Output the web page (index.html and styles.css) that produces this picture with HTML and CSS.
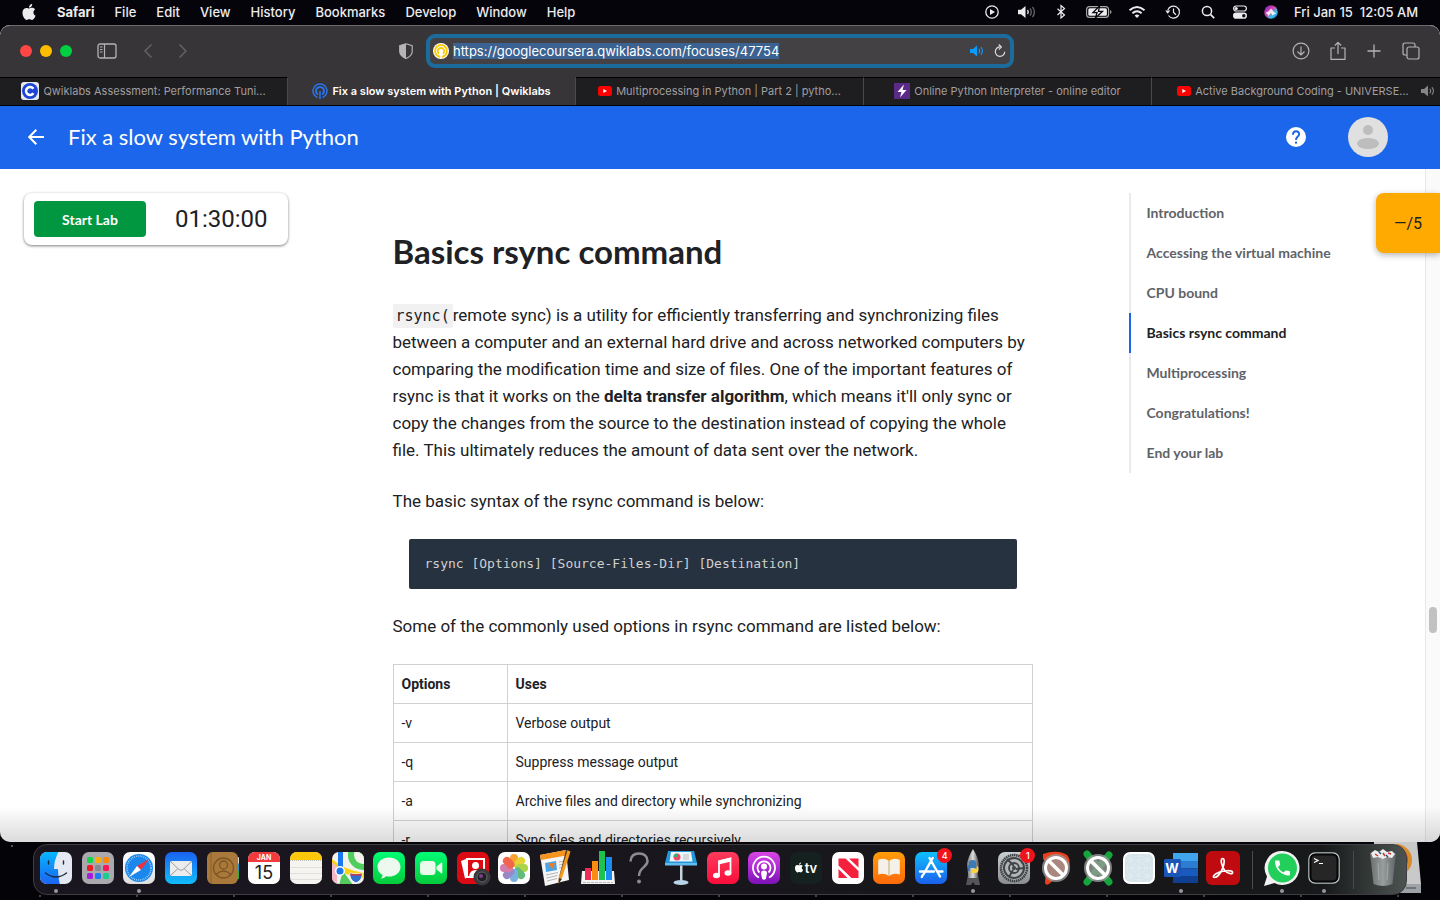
FILE: index.html
```html
<!DOCTYPE html>
<html lang="en">
<head>
<meta charset="utf-8">
<meta name="viewport" content="width=device-width, initial-scale=1">
<title>Fix a slow system with Python | Qwiklabs</title>
<link rel="stylesheet" href="styles.css">
</head>
<body>

<!-- shared shapes -->
<svg class="defs" width="0" height="0" aria-hidden="true">
  <defs>
    <symbol id="apple" viewBox="0 0 24 24">
      <path fill="currentColor" d="M12.152 6.896c-.948 0-2.415-1.078-3.96-1.04-2.04.027-3.91 1.183-4.961 3.014-2.117 3.675-.546 9.103 1.519 12.09 1.013 1.454 2.208 3.09 3.792 3.039 1.52-.065 2.09-.987 3.935-.987 1.831 0 2.35.987 3.96.948 1.637-.026 2.676-1.48 3.676-2.948 1.156-1.688 1.636-3.325 1.662-3.415-.039-.013-3.182-1.221-3.22-4.857-.026-3.04 2.48-4.494 2.597-4.559-1.429-2.09-3.623-2.324-4.39-2.376-2-.156-3.675 1.09-4.61 1.09zM15.53 3.83c.843-1.012 1.4-2.427 1.245-3.83-1.207.052-2.662.805-3.532 1.818-.78.896-1.454 2.338-1.273 3.714 1.338.104 2.715-.688 3.559-1.701"/>
    </symbol>
    <symbol id="youtube" viewBox="0 0 14 12">
      <rect y="1" width="14" height="10" rx="2.5" fill="#f00"/>
      <path d="M5.3 3.9v4.2L9 6z" fill="#fff"/>
    </symbol>
    <symbol id="speaker" viewBox="0 0 14 12">
      <path d="M0 4h3l4-3.4v10.800L3 8H0z" fill="currentColor"/>
      <path d="M9 4q1.400 2 0 4M11.200 2.600q2.500 3.400 0 6.800" fill="none" stroke="currentColor" stroke-width="1.100" stroke-linecap="round"/>
    </symbol>
    <symbol id="blocked" viewBox="0 0 34 34">
      <circle cx="17" cy="17" r="14" fill="#999" opacity=".8"/>
      <circle cx="17" cy="17" r="10.500" fill="none" stroke="#fff" stroke-width="3"/>
      <path d="M9.500 9.500l15 15" stroke="#fff" stroke-width="3.500"/>
    </symbol>
    <linearGradient id="gBlue" x2="0" y2="1"><stop stop-color="#1a62f0"/><stop offset="1" stop-color="#12bdfb"/></linearGradient>
    <linearGradient id="gStore" x2="0" y2="1"><stop stop-color="#0fc0fc"/><stop offset="1" stop-color="#1b60ee"/></linearGradient>
    <linearGradient id="gFinder" x2="0" y2="1"><stop stop-color="#06b8ff"/><stop offset="1" stop-color="#1c62f2"/></linearGradient>
    <linearGradient id="gGreen" x2="0" y2="1"><stop stop-color="#02fb76"/><stop offset="1" stop-color="#05cb3b"/></linearGradient>
    <linearGradient id="gGrey" x2="0" y2="1"><stop stop-color="#c9cfd2"/><stop offset="1" stop-color="#8a8d90"/></linearGradient>
    <linearGradient id="gPod" x2="0" y2="1"><stop stop-color="#d945e8"/><stop offset="1" stop-color="#7d12b8"/></linearGradient>
    <linearGradient id="gMusic" x2="0" y2="1"><stop stop-color="#fb3b5d"/><stop offset="1" stop-color="#fb0d3a"/></linearGradient>
    <linearGradient id="gBook" x2="0" y2="1"><stop stop-color="#ff9d0a"/><stop offset="1" stop-color="#ff6a0a"/></linearGradient>
    <linearGradient id="gPaper" x2="0" y2="1"><stop stop-color="#fff"/><stop offset="1" stop-color="#dedede"/></linearGradient>
    <linearGradient id="gRocket"><stop stop-color="#777"/><stop offset=".5" stop-color="#ddd"/><stop offset="1" stop-color="#444"/></linearGradient>
    <linearGradient id="gBin"><stop stop-color="#74787a"/><stop offset=".5" stop-color="#a9adae"/><stop offset="1" stop-color="#62676a"/></linearGradient>
    <linearGradient id="gSiri" x2="1" y2="1"><stop stop-color="#4a2bd8"/><stop offset=".4" stop-color="#e23aa5"/><stop offset=".7" stop-color="#36c5e8"/><stop offset="1" stop-color="#2358d8"/></linearGradient>
    <clipPath id="tile"><rect x="1" y="1" width="32" height="32" rx="7"/></clipPath>
  </defs>
</svg>

<header class="menubar">
  <nav class="menus">
    <svg class="apple" width="16" height="16"><use href="#apple"/></svg>
    <a class="app-name" href="#">Safari</a>
    <a href="#">File</a>
    <a href="#">Edit</a>
    <a href="#">View</a>
    <a href="#">History</a>
    <a href="#">Bookmarks</a>
    <a href="#">Develop</a>
    <a href="#">Window</a>
    <a href="#">Help</a>
  </nav>
  <div class="status">
    <svg width="16" height="16" viewBox="0 0 16 16"><circle cx="8" cy="8" r="6.200" fill="none" stroke="currentColor" stroke-width="1.300"/><path d="M6 5v6l5-3z" fill="currentColor"/></svg>
    <svg width="20" height="16" viewBox="0 0 20 16"><path d="M2 5.700h3L9.500 2v12L5 10.300H2z" fill="currentColor"/><path d="M11.500 6q1.500 2 0 4" fill="none" stroke="currentColor" stroke-width="1.300"/><path d="M14 4.300q2.600 3.700 0 7.400M16.500 2.800q3.800 5.200 0 10.400" fill="none" stroke="#66666a" stroke-width="1.300"/></svg>
    <svg width="18" height="16" viewBox="0 0 18 16"><path d="M5.500 4.800l7 6.200L9 14V1.500l3.500 3L5.500 11" fill="none" stroke="currentColor" stroke-width="1.200"/></svg>
    <svg width="26" height="16" viewBox="0 0 26 16"><rect x=".6" y="2.600" width="22" height="10.800" rx="3" fill="none" stroke="#aaa" stroke-width="1.100"/><rect x="2.300" y="4.300" width="18.600" height="7.400" rx="1.500" fill="currentColor"/><path d="M24.200 6v4q1.300-.6 1.300-2t-1.300-2z" fill="#aaa"/><path d="M13.500 2L7 8.600h4L9.500 14 16.500 7.300h-4z" fill="currentColor" stroke="#05050c" stroke-width="1.300"/></svg>
    <svg width="18" height="16" viewBox="0 0 18 16"><g fill="none" stroke="currentColor" stroke-width="2"><path d="M1.500 6.300q7.500-6.600 15 0M4.400 9.300q4.600-4 9.200 0"/></g><path d="M6.600 11.600q2.400-2 4.800 0L9 14z" fill="currentColor"/></svg>
    <svg width="22" height="16" viewBox="0 0 22 16"><path d="M5.800 6A6 6 0 1 1 6.500 11.500" fill="none" stroke="currentColor" stroke-width="1.200"/><path d="M3.300 6.500h5l-2.600 3.200z" fill="currentColor"/><path d="M11.500 4.500V8.500l2.500 2.300" fill="none" stroke="currentColor" stroke-width="1.200"/></svg>
    <svg width="16" height="16" viewBox="0 0 16 16"><circle cx="7" cy="7" r="4.600" fill="none" stroke="currentColor" stroke-width="1.500"/><path d="M10.400 10.400l3.800 3.800" stroke="currentColor" stroke-width="1.700"/></svg>
    <svg width="16" height="16" viewBox="0 0 16 16"><rect x="1.600" y="2" width="12.800" height="5" rx="2.500" fill="none" stroke="currentColor" stroke-width="1.200"/><circle cx="4.200" cy="4.500" r="1.600" fill="currentColor"/><rect x="1" y="8.600" width="14" height="6.200" rx="3.100" fill="currentColor"/><circle cx="11.800" cy="11.700" r="1.700" fill="#111"/></svg>
    <svg width="14" height="16" viewBox="0 0 14 16"><circle cx="7" cy="8" r="6.800" fill="url(#gSiri)"/><path d="M1.500 9Q5 8 7 4.500 9.500 8 12.500 10q-3-.5-4 1.500L7 9l-2.500 3q-.5-2-3-3z" fill="#fff" opacity=".85"/></svg>
    <time class="clock">Fri Jan 15&nbsp; 12:05 AM</time>
  </div>
</header>

<section class="window">
  <div class="toolbar">
    <div class="toolbar-left">
      <div class="lights">
        <button class="light close" aria-label="Close"></button>
        <button class="light minimize" aria-label="Minimize"></button>
        <button class="light zoom" aria-label="Zoom"></button>
      </div>
      <button class="tool" aria-label="Sidebar"><svg width="20" height="16" viewBox="0 0 20 16"><rect x="1" y="1" width="18" height="14" rx="2" fill="none" stroke="currentColor" stroke-width="1.300"/><path d="M7.500 1v14M3 4h2.500M3 6.500h2.500M3 9h2.500" stroke="currentColor" stroke-width="1.200"/></svg></button>
      <div class="history">
        <button class="tool dim" aria-label="Back"><svg width="10" height="16" viewBox="0 0 10 16"><path d="M8.500 1.500L2 8l6.500 6.500" fill="none" stroke="currentColor" stroke-width="1.500"/></svg></button>
        <button class="tool dim" aria-label="Forward"><svg width="10" height="16" viewBox="0 0 10 16"><path d="M1.500 1.500L8 8l-6.500 6.500" fill="none" stroke="currentColor" stroke-width="1.500"/></svg></button>
      </div>
      <button class="tool shield" aria-label="Privacy report"><svg width="14" height="16" viewBox="0 0 14 16"><path d="M7 .8l6.200 2v6Q13 13 7 15.500 1 13 .8 8.800v-6z" fill="none" stroke="currentColor" stroke-width="1.200"/><path d="M7 .5L.5 2.500v6.300Q.8 13.200 7 16z" fill="currentColor"/></svg></button>
    </div>
    <div class="address">
      <svg width="16" height="16" viewBox="0 0 16 16"><circle cx="8" cy="8" r="8" fill="#fff"/><circle cx="8" cy="8" r="5.900" fill="none" stroke="#fbcb0a" stroke-width="2"/><path d="M6 10.700A3.200 3.200 0 1 1 10 10.700" fill="none" stroke="#fbcb0a" stroke-width="1.800"/><path d="M8 8v7" stroke="#fff" stroke-width="1.600"/></svg>
      <input class="url" type="text" aria-label="Address" value="https://googlecoursera.qwiklabs.com/focuses/47754">
      <button class="tool sound" aria-label="Mute tab"><svg width="14" height="12"><use href="#speaker"/></svg></button>
      <button class="tool" aria-label="Reload"><svg width="12" height="14" viewBox="0 0 12 14"><path d="M6.500 3A4.700 4.700 0 1 0 10.700 7.700" fill="none" stroke="#ddd" stroke-width="1.200"/><path d="M4.800 .5L7.400 3.100 4.800 5.700" fill="none" stroke="#ddd" stroke-width="1.200"/></svg></button>
    </div>
    <div class="toolbar-right">
      <button class="tool" aria-label="Downloads"><svg width="18" height="18" viewBox="0 0 18 18"><circle cx="9" cy="9" r="7.900" fill="none" stroke="currentColor" stroke-width="1.200"/><path d="M9 4.500v8.500M5.500 9.500L9 13l3.500-3.500" fill="none" stroke="currentColor" stroke-width="1.200"/></svg></button>
      <button class="tool" aria-label="Share"><svg width="16" height="20" viewBox="0 0 16 20"><path d="M5 7H1v11.400h14V7h-4M8 13V1.500M4.800 4.500L8 1.300l3.200 3.200" fill="none" stroke="currentColor" stroke-width="1.200" stroke-linejoin="round"/></svg></button>
      <button class="tool" aria-label="New tab"><svg width="16" height="16" viewBox="0 0 16 16"><path d="M8 1.500v13M1.500 8h13" stroke="currentColor" stroke-width="1.300"/></svg></button>
      <button class="tool" aria-label="Show tabs"><svg width="18" height="18" viewBox="0 0 18 18"><rect x="5" y="5" width="12" height="12" rx="2" fill="none" stroke="currentColor" stroke-width="1.200"/><path d="M5 13H3q-2 0-2-2V3q0-2 2-2h8q2 0 2 2v2" fill="none" stroke="currentColor" stroke-width="1.200"/></svg></button>
    </div>
  </div>

  <nav class="tabs">
    <a class="tab" href="#">
      <svg width="18" height="18" viewBox="0 0 18 18"><rect width="18" height="18" rx="3" fill="#e8e8f0"/><circle cx="9" cy="9" r="8" fill="#1b45d2"/><path d="M12.400 6.800A4 4 0 1 0 12.400 11.200" fill="none" stroke="#fff" stroke-width="2.500"/></svg>
      <span>Qwiklabs Assessment: Performance Tuni...</span>
    </a>
    <a class="tab active" href="#">
      <svg width="16" height="16" viewBox="0 0 16 16"><path d="M5.500 14.600A7 7 0 1 1 10.500 14.600" fill="none" stroke="#2a72ea" stroke-width="1.500"/><path d="M6 11.500A4 4 0 1 1 10 11.500" fill="none" stroke="#2a72ea" stroke-width="2"/><path d="M8 8v8" stroke="#2a72ea" stroke-width="1.600"/></svg>
      <span>Fix a slow system with Python | Qwiklabs</span>
    </a>
    <a class="tab" href="#">
      <svg width="14" height="12"><use href="#youtube"/></svg>
      <span>Multiprocessing in Python | Part 2 | pytho...</span>
    </a>
    <a class="tab" href="#">
      <svg width="16" height="16" viewBox="0 0 16 16"><rect width="16" height="16" fill="#5b2a86"/><path d="M10 1.500L3.500 9H7.500L6 14.500 12.500 7H8.500z" fill="#fff"/></svg>
      <span>Online Python Interpreter - online editor</span>
    </a>
    <a class="tab playing" href="#">
      <svg width="14" height="12"><use href="#youtube"/></svg>
      <span>Active Background Coding - UNIVERSE...</span>
      <svg class="tab-sound" width="14" height="12"><use href="#speaker"/></svg>
    </a>
  </nav>

  <header class="lab-header">
    <a class="back" href="#" aria-label="Back"><svg width="16" height="16" viewBox="0 0 16 16"><path d="M16 8H1.500M8.300 .8L1.200 8l7.100 7.200" fill="none" stroke="#fff" stroke-width="2"/></svg></a>
    <h1>Fix a slow system with Python</h1>
    <button class="help" aria-label="Help"><svg width="20" height="20" viewBox="0 0 20 20"><circle cx="10" cy="10" r="10" fill="#fff"/><path d="M6.900 7.800Q6.900 4.300 10 4.300T13.100 7.200C13.100 9.500 10 9.700 10 13" fill="none" stroke="#1b66ea" stroke-width="1.900"/><rect x="9" y="14.600" width="2" height="2" fill="#1b66ea"/></svg></button>
    <button class="avatar" aria-label="Account"><svg width="40" height="40" viewBox="0 0 40 40"><circle cx="20" cy="20" r="20" fill="#e0e0e0"/><circle cx="20" cy="13" r="5" fill="#bdbdbd"/><ellipse cx="20" cy="26.500" rx="11" ry="5.500" fill="#bdbdbd"/></svg></button>
  </header>

  <div class="page">
    <div class="lab">
      <aside class="lab-side">
        <div class="lab-control">
          <button class="start">Start Lab</button>
          <span class="timer">01:30:00</span>
        </div>
      </aside>

      <main class="lab-content">
        <h2>Basics rsync command</h2>
        <p><code>rsync(</code>remote sync) is a utility for efficiently transferring and synchronizing files between a computer and an external hard drive and across networked computers by comparing the modification time and size of files. One of the important features of rsync is that it works on the <strong>delta transfer algorithm</strong>, which means it'll only sync or copy the changes from the source to the destination instead of copying the whole file. This ultimately reduces the amount of data sent over the network.</p>
        <p>The basic syntax of the rsync command is below:</p>
        <pre>rsync [Options] [Source-Files-Dir] [Destination]</pre>
        <p>Some of the commonly used options in rsync command are listed below:</p>
        <table>
          <thead>
            <tr><th>Options</th><th>Uses</th></tr>
          </thead>
          <tbody>
            <tr><td>-v</td><td>Verbose output</td></tr>
            <tr><td>-q</td><td>Suppress message output</td></tr>
            <tr><td>-a</td><td>Archive files and directory while synchronizing</td></tr>
            <tr><td>-r</td><td>Sync files and directories recursively</td></tr>
          </tbody>
        </table>
      </main>

      <nav class="outline">
        <a href="#">Introduction</a>
        <a href="#">Accessing the virtual machine</a>
        <a href="#">CPU bound</a>
        <a class="current" href="#">Basics rsync command</a>
        <a href="#">Multiprocessing</a>
        <a href="#">Congratulations!</a>
        <a href="#">End your lab</a>
      </nav>
    </div>
    <div class="scrollbar"><div class="thumb"></div></div>
    <button class="score">—/5</button>
  </div>
</section>

<footer class="desktop">
  <!-- disk on the desktop, partly behind the dock -->
  <svg class="disk" width="50" height="54" viewBox="0 0 50 54"><path d="M2 0h43l4 42H0z" fill="#c9c9c9"/><circle cx="24" cy="18" r="16" fill="#d98a2b"/><circle cx="24" cy="18" r="12" fill="#c43"/><path d="M0 42h49v9H0z" fill="#9da3a8"/><path d="M34 46h10" stroke="#444"/></svg>
  <div class="dock">
    <div class="apps">
      <button class="item running" aria-label="Finder"><svg width="34" height="34" viewBox="0 0 34 34"><g clip-path="url(#tile)"><path d="M0 0h34v34H0z" fill="#e3e8f2"/><path d="M0 0h20q-5 9-5 18h4q0 8 2 16H0z" fill="url(#gFinder)"/></g><path d="M9.500 10v3M24.500 10v3M6.500 22q10.500 8 21 0" fill="none" stroke="#1d2a3c" stroke-width="1.400" stroke-linecap="round"/></svg></button>
      <button class="item" aria-label="Launchpad"><svg width="34" height="34" viewBox="0 0 34 34"><rect x="1" y="1" width="32" height="32" rx="7" fill="#a9a9ae"/><rect x="6" y="6" width="6" height="6" rx="1.500" fill="#12d64a"/><rect x="14" y="6" width="6" height="6" rx="1.500" fill="#f9ad0b"/><rect x="22" y="6" width="6" height="6" rx="1.500" fill="#fb8a0c"/><rect x="6" y="14" width="6" height="6" rx="1.500" fill="#ee1c25"/><rect x="14" y="14" width="6" height="6" rx="1.500" fill="#858b90"/><rect x="22" y="14" width="6" height="6" rx="1.500" fill="#f7185c"/><rect x="6" y="22" width="6" height="6" rx="1.500" fill="#a81be0"/><rect x="14" y="22" width="6" height="6" rx="1.500" fill="#1c7df5"/><rect x="22" y="22" width="6" height="6" rx="1.500" fill="#16cf8e"/></svg></button>
      <button class="item running" aria-label="Safari"><svg width="34" height="34" viewBox="0 0 34 34"><rect x="1" y="1" width="32" height="32" rx="7" fill="url(#gPaper)"/><circle cx="17" cy="17" r="14" fill="#1b87ec"/><circle cx="17" cy="17" r="12" fill="none" stroke="#bfe3ff" stroke-width="1.500" stroke-dasharray=".7 1.200"/><path d="M27 8L15 15l4 4z" fill="#f2303a"/><path d="M7 26l8-11 4 4z" fill="#fff"/></svg></button>
      <button class="item" aria-label="Mail"><svg width="34" height="34" viewBox="0 0 34 34"><rect x="1" y="1" width="32" height="32" rx="7" fill="url(#gBlue)"/><rect x="6" y="10" width="22" height="15" rx="2" fill="#ececec"/><path d="M6.500 10.500L15 18.500q2 1.700 4 0l8.500-8M6.500 24.500l7.500-7M27.500 24.500l-7.500-7" fill="none" stroke="#9a9fa6" stroke-width="1"/></svg></button>
      <button class="item" aria-label="Contacts"><svg width="34" height="34" viewBox="0 0 34 34"><rect x="28" y="6" width="5" height="7" rx="1" fill="#d9d9d9"/><rect x="28" y="13" width="5" height="7" fill="#1f93c4"/><rect x="28" y="20" width="5" height="8" fill="#38a838"/><rect x="1" y="1" width="31" height="32" rx="6" fill="#a9793c"/><path d="M5 1v32" stroke="#8d622d"/><g fill="none" stroke="#7d5525" stroke-width="1.300"><circle cx="17.500" cy="17" r="10"/><circle cx="17.500" cy="14" r="4"/><path d="M10 23.500q7.500-7 15 0"/></g></svg></button>
      <button class="item" aria-label="Calendar"><svg width="34" height="34" viewBox="0 0 34 34"><g clip-path="url(#tile)"><path d="M0 0h34v34H0z" fill="#fff"/><path d="M0 0h34v11H0z" fill="#f33b3b"/></g><text x="17" y="9" class="cal-month">JAN</text><text x="17" y="28" class="cal-day">15</text></svg></button>
      <button class="item" aria-label="Notes"><svg width="34" height="34" viewBox="0 0 34 34"><g clip-path="url(#tile)"><path d="M0 0h34v34H0z" fill="#f5f4f0"/><path d="M0 0h34v9H0z" fill="#fdc80c"/><path d="M1 16.500h32M1 22.500h32M1 28.500h32" stroke="#e0e0dc"/><path d="M1 9.500h32" stroke="#bbb" stroke-dasharray="1 1"/></g></svg></button>
      <button class="item" aria-label="Maps"><svg width="34" height="34" viewBox="0 0 34 34"><g clip-path="url(#tile)"><path d="M0 0h34v34H0z" fill="#f3f2ea"/><circle cx="32" cy="4" r="15" fill="#4fce5d"/><circle cx="32" cy="4" r="9" fill="#f3f2ea"/><path d="M1 8q10 10 32 14v5Q10 24 1 14z" fill="#fbd20d"/><path d="M0 10l6 6v18H0z" fill="#f5b8c6"/><path d="M12 20l10 14H8z" fill="#55c95d"/><path d="M7 0h5v20H7z" fill="#1b78f0"/></g><circle cx="9" cy="20" r="5" fill="#fff"/><circle cx="9" cy="20" r="3.500" fill="#1b78f0"/><path d="M19 22q6 2 12 0 1 7-6 10-7-3-6-10z" fill="#2f6fd0" stroke="#fff" stroke-width=".8"/><path d="M19.500 22.500q5.500 1.500 11 0v2h-11z" fill="#d8323a"/></svg></button>
      <button class="item" aria-label="Messages"><svg width="34" height="34" viewBox="0 0 34 34"><rect x="1" y="1" width="32" height="32" rx="7" fill="url(#gGreen)"/><path d="M17 6.500c-7 0-11.500 4.300-11.500 9.500 0 3.500 2 6.300 5 8 .2 1.500-.7 2.700-2 3.500 2.500 0 4.300-.7 5.500-2.200 8 1.500 14.500-3 14.500-9.300 0-5.200-4.500-9.500-11.500-9.500z" fill="#edf9ee"/></svg></button>
      <button class="item" aria-label="FaceTime"><svg width="34" height="34" viewBox="0 0 34 34"><rect x="1" y="1" width="32" height="32" rx="7" fill="url(#gGreen)"/><rect x="6" y="10" width="15.500" height="14" rx="3.500" fill="#eafaeb"/><path d="M22.500 15.500l5-4q.8 0 .8 1v9q0 1-.8 1l-5-4z" fill="#eafaeb"/></svg></button>
      <button class="item" aria-label="Photo Booth"><svg width="34" height="34" viewBox="0 0 34 34"><rect x="1" y="1" width="32" height="32" rx="7" fill="#dc0a12"/><path d="M5 10l5-2 5 18-6 1.500z" fill="#fff"/><path d="M10 7h19v20H10z" fill="#fff"/><path d="M12 9h15v16H12z" fill="#dc0a12"/><circle cx="19.500" cy="14.500" r="3.500" fill="#fff"/><path d="M13 25q1-6 6.500-6t6.500 6z" fill="#fff"/><circle cx="26" cy="26" r="8.500" fill="#3a3a3c"/><circle cx="26" cy="26" r="5" fill="#202024" stroke="#66666a"/><circle cx="25" cy="25" r="2" fill="#7a3f8c"/></svg></button>
      <button class="item" aria-label="Photos"><svg width="34" height="34" viewBox="0 0 34 34"><rect x="1" y="1" width="32" height="32" rx="7" fill="#fff"/><g opacity=".9"><rect x="13" y="3" width="8" height="13" rx="4" fill="#fb9a1c"/><rect x="13" y="3" width="8" height="13" rx="4" fill="#e0cf1f" transform="rotate(45 17 17)"/><rect x="13" y="3" width="8" height="13" rx="4" fill="#a5cf35" transform="rotate(90 17 17)"/><rect x="13" y="3" width="8" height="13" rx="4" fill="#4fb56c" transform="rotate(135 17 17)"/><rect x="13" y="3" width="8" height="13" rx="4" fill="#6aa8dc" transform="rotate(180 17 17)"/><rect x="13" y="3" width="8" height="13" rx="4" fill="#8e7cc3" transform="rotate(225 17 17)"/><rect x="13" y="3" width="8" height="13" rx="4" fill="#d070a5" transform="rotate(270 17 17)"/><rect x="13" y="3" width="8" height="13" rx="4" fill="#f0553c" transform="rotate(315 17 17)"/></g></svg></button>
      <button class="item" aria-label="Pages"><svg width="34" height="34" viewBox="0 0 34 34"><path d="M1 4l26-5 3 30-24 6z" fill="#f5f5f5"/><path d="M1 4l26-5 .6 5.500L1.800 9z" fill="#f7941e"/><path d="M6 12l11-2 1 9-11 2z" fill="#4aa5e8"/><path d="M9 12.500l7-.5-2.500 6z" fill="#f47b20"/><path d="M20 11l6-1M20 14l5-.8M20 17l5-.8M7 24l12-2.500M7.500 27l11-2.500M8 30l10-2.500" stroke="#b5b5b5"/><path d="M28-1l3.500 1.500L23 27l-3.500 6 .3-7z" fill="#f39a1f"/><path d="M27-1l1.500.4-8.500 27z" fill="#5a3a1a"/><path d="M19.800 27l3 1-3.300 5z" fill="#333"/></svg></button>
      <button class="item" aria-label="Numbers"><svg width="34" height="34" viewBox="0 0 34 34"><path d="M1 20h32l1 13H0z" fill="#f4f4f4"/><rect x="4" y="17" width="6" height="12" fill="#ef2b55"/><rect x="11" y="10" width="6" height="19" fill="#fb8c12"/><rect x="18" y="0" width="6" height="29" fill="#1fc24c"/><rect x="25" y="6" width="6" height="23" fill="#1c8df0"/><path d="M2 31.500h30" stroke="#bbb" stroke-dasharray="3 1"/></svg></button>
      <button class="item" aria-label="Missing application"><svg width="34" height="34" viewBox="0 0 34 34"><path d="M8.500 10.500Q9 2.500 17 2.500t8.500 7.500c0 6.500-8.500 6-8.500 15" fill="none" stroke="#8d8b91" stroke-width="2.500"/><circle cx="17" cy="30.500" r="2" fill="#8d8b91"/></svg></button>
      <button class="item" aria-label="Keynote"><svg width="34" height="34" viewBox="0 0 34 34"><path d="M4 0h26l3 12H1z" fill="#2196d8"/><path d="M1 12h32v2.500H1z" fill="#64bdf0"/><path d="M7 1h20l1.500 9.500h-23z" fill="#eef5fa"/><circle cx="13" cy="6" r="3.500" fill="#ef4a6a"/><path d="M13 6V2.500a3.500 3.500 0 0 0-3.500 3.500z" fill="#2bb673"/><path d="M19 4h6M19 6h6M19 8h6" stroke="#bbb"/><path d="M16 14.500h2.500V31H16z" fill="#c7d3dd"/><ellipse cx="17" cy="31.500" rx="7.500" ry="2.500" fill="#b9d4e8"/></svg></button>
      <button class="item" aria-label="Music"><svg width="34" height="34" viewBox="0 0 34 34"><rect x="1" y="1" width="32" height="32" rx="7" fill="url(#gMusic)"/><path d="M13 24V10.500l11.500-3V21.500" fill="none" stroke="#fff" stroke-width="1.800"/><path d="M12.500 9.500l12.500-3v4l-12.500 3z" fill="#fff"/><ellipse cx="10.500" cy="24.500" rx="3.500" ry="2.800" fill="#fff"/><ellipse cx="22" cy="22" rx="3.500" ry="2.800" fill="#fff"/></svg></button>
      <button class="item" aria-label="Podcasts"><svg width="34" height="34" viewBox="0 0 34 34"><rect x="1" y="1" width="32" height="32" rx="7" fill="url(#gPod)"/><g fill="none" stroke="#fff" stroke-width="1.800"><path d="M12 26.500A11 11 0 1 1 22 26.500M12.500 21.500A6.500 6.500 0 1 1 21.500 21.500"/></g><circle cx="17" cy="15.500" r="3" fill="#fff"/><path d="M14 22q0-2.500 3-2.500t3 2.500l-1 5.500q-2 2.500-4 0z" fill="#fff"/></svg></button>
      <button class="item" aria-label="TV"><svg width="34" height="34" viewBox="0 0 34 34"><rect x="1" y="1" width="32" height="32" rx="7" fill="#15211f"/><svg x="5" y="10.500" width="10" height="12" color="#fff"><use href="#apple"/></svg><text x="22" y="22" class="tv-word">tv</text></svg></button>
      <button class="item" aria-label="News"><svg width="34" height="34" viewBox="0 0 34 34"><rect x="1" y="1" width="32" height="32" rx="7" fill="#fff"/><path d="M7.500 7.500h7l13 12.500v7h-7l-13-12.500z" fill="#f5203e"/><path d="M18 7.500h9.500v9zM7.500 18l9 9h-9z" fill="#f5203e"/></svg></button>
      <button class="item" aria-label="Books"><svg width="34" height="34" viewBox="0 0 34 34"><rect x="1" y="1" width="32" height="32" rx="7" fill="url(#gBook)"/><path d="M17 10q-4.500-3.500-10-1.500-.8.300-.8 1v14q5.800-2.300 10.800 1.500 5-3.800 10.800-1.500v-14q0-.7-.8-1Q21.500 6.500 17 10z" fill="#f4f1ea"/><path d="M17 10v15" stroke="#cfa66f"/></svg></button>
      <button class="item" aria-label="App Store"><svg width="34" height="34" viewBox="0 0 34 34"><rect x="1" y="1" width="32" height="32" rx="7" fill="url(#gStore)"/><path d="M18.700 7l-9 16M15.500 7l10.500 18.500M6 20.500h14M24 20.500h4.500M8.500 24.500l-.7 1.500" stroke="#fff" stroke-width="2.400" stroke-linecap="round"/></svg><span class="badge">4</span></button>
      <button class="item running" aria-label="Python launcher"><svg width="34" height="34" viewBox="0 0 34 34"><path d="M12 24l-2 10h5l2-3 2 3h5l-2-10z" fill="#555"/><path d="M17-2q-5 8-6 15l1.500 14h9L23 13Q22 6 17-2z" fill="url(#gRocket)"/><path d="M13 12q0-3 3.500-3T20 12v5h-6v3h-2v-5q0-1 1-1z" fill="#3b7ab5"/><path d="M21 15q1.500 0 1.500 3 0 4-3 4h-4v-2q0-2 2-2h3z" fill="#fbd43b"/></svg></button>
      <button class="item" aria-label="System Preferences"><svg width="34" height="34" viewBox="0 0 34 34"><rect x="1" y="1" width="32" height="32" rx="7" fill="url(#gGrey)"/><circle cx="17" cy="17" r="13" fill="#b3b6b8" stroke="#3e4144" stroke-width="2.500" stroke-dasharray="1.500 .6"/><circle cx="17" cy="17" r="10" fill="none" stroke="#414447" stroke-width="2"/><circle cx="17" cy="17" r="5" fill="none" stroke="#414447" stroke-width="1.800"/><circle cx="17" cy="17" r="2" fill="#414447"/><path d="M17 15L10 8M19 18l8-1M16 19l-4 7" stroke="#414447" stroke-width="1.800"/></svg><span class="badge">1</span></button>
      <button class="item" aria-label="Unsupported application"><svg width="34" height="34" viewBox="0 0 34 34"><path d="M4 3q14-5 24 1 4 4 2 12L10 33q-4 2-4-2L8 12 4 8z" fill="#e8401c"/><use href="#blocked" width="34" height="34"/></svg></button>
      <button class="item" aria-label="Unsupported application"><svg width="34" height="34" viewBox="0 0 34 34"><path d="M6 3l22 28M28 4L6 31" stroke="#16a53c" stroke-width="7" stroke-linecap="round"/><use href="#blocked" width="34" height="34"/></svg></button>
      <button class="item" aria-label="Blank application"><svg width="34" height="34" viewBox="0 0 34 34"><rect x="2" y="2" width="30" height="30" rx="6" fill="#d6e4ea"/><g fill="none" stroke="#e6f0f4" stroke-width=".6"><circle cx="17" cy="17" r="12"/><circle cx="17" cy="17" r="6"/><path d="M4 4l26 26M30 4L4 30M17 3v28M3 17h28M9 3v28M25 3v28M3 9h28M3 25h28"/></g><rect x="2" y="2" width="30" height="30" rx="6" fill="none" stroke="#fff" stroke-width="2"/></svg></button>
      <button class="item running" aria-label="Word"><svg width="34" height="34" viewBox="0 0 34 34"><path d="M9 2h25v8H9z" fill="#41a5ee"/><path d="M9 10h25v7.500H9z" fill="#2b7cd3"/><path d="M9 17.500h25V25H9z" fill="#185abd"/><path d="M9 25h25v7H9z" fill="#103f91"/><rect y="8" width="17" height="18" rx="1.500" fill="#1a56b8"/><text x="8" y="22" class="word-w">W</text></svg></button>
      <button class="item" aria-label="Acrobat"><svg width="34" height="34" viewBox="0 0 34 34"><rect width="34" height="34" rx="6" fill="#bf0b0f"/><path d="M16.500 7.500c2.500 0 2 5 .2 9.500-2 5-5.500 9.500-8.200 9.500-2.200 0-1.200-3.200 4.500-5.200 5-1.800 12.500-2.300 13.500-.2 1 2.500-4.500 2.200-7.500-1.300-3.500-4-5-12.300-2.500-12.300z" fill="none" stroke="#fff" stroke-width="1.700"/></svg></button>
    </div>
    <div class="divider"></div>
    <div class="apps recent">
      <button class="item running" aria-label="WhatsApp"><svg width="34" height="34" viewBox="0 0 34 34"><path d="M17.500 0a17 17 0 1 1-8 32L-1 35l3-9.500A17 17 0 0 1 17.500 0z" fill="#f2f2f2"/><circle cx="17.500" cy="17" r="14.500" fill="#22cf5b"/><svg x="7.500" y="7" width="20" height="20" viewBox="0 0 24 24"><path fill="#fff" d="M6.620 10.790c1.440 2.830 3.760 5.140 6.590 6.590l2.200-2.200c.27-.27.67-.36 1.020-.24 1.120.37 2.330.57 3.570.57.55 0 1 .45 1 1V20c0 .55-.45 1-1 1-9.390 0-17-7.610-17-17 0-.55.45-1 1-1h3.500c.55 0 1 .45 1 1 0 1.250.2 2.450.57 3.570.11.35.03.74-.25 1.020l-2.200 2.200z"/></svg></svg></button>
      <button class="item running" aria-label="Terminal"><svg width="34" height="34" viewBox="0 0 34 34"><rect x="2" y="2" width="30" height="30" rx="6" fill="#262627" stroke="#b5c0c2" stroke-width="1.500"/><rect x="3.500" y="3.500" width="27" height="27" rx="5" fill="none" stroke="#050505" stroke-width="2"/><path d="M7 7.500l4 2-4 2M12 12.500h4" fill="none" stroke="#fff" stroke-width="1.200"/></svg></button>
    </div>
    <div class="divider"></div>
    <button class="item" aria-label="Trash"><svg width="34" height="34" viewBox="0 0 34 34"><path d="M4 2h26l-3.500 31q-9.500 4-19 0z" fill="url(#gBin)" opacity=".85"/><path d="M5 2l4-3 4 2 4-3 4 3 5-1 3 3-3 4-5-1-4 2-5-2-5 1z" fill="#eee"/><path d="M9 3l3 2M17 2l2 3M22 2l3 1" stroke="#c33" stroke-width="1.500"/><path d="M13 1l2 2M20 4l2 2" stroke="#257" stroke-width="1.500"/><path d="M12 12l1 17M22 12l-1 17" stroke="#d0d4d5" opacity=".4"/></svg></button>
  </div>
</footer>

</body>
</html>
```

FILE: styles.css
```css
* {
  box-sizing: border-box;
}

body {
  display: flex;
  flex-direction: column;
  height: 100vh;
  margin: 0;
  overflow: hidden;
  font-family: Roboto, "Liberation Sans", sans-serif;
  color: #202124;
  background-color: #040308;
  background-image:
    radial-gradient(circle at 12px 60px, #555 1px, transparent 1px),
    radial-gradient(circle at 70px 20px, #333 1px, transparent 1px),
    radial-gradient(circle at 40px 110px, #444 1px, transparent 1px);
  background-size: 97px 131px;
}

a {
  color: inherit;
  text-decoration: none;
}

button {
  padding: 0;
  border: none;
  background: none;
  color: inherit;
  font: inherit;
  cursor: pointer;
}

svg {
  display: block;
  flex: none;
  overflow: visible;
}

.defs {
  position: absolute;
}

/* Menu bar */
.menubar {
  display: flex;
  justify-content: space-between;
  align-items: center;
  height: 25px;
  padding: 0 19px 2px 21px;
  background: #05040b;
  color: #ececee;
  font: 500 13px Inter, "Liberation Sans", sans-serif;
}

.menus {
  display: flex;
  align-items: center;
  gap: 20px;
}

.app-name {
  font-weight: 700;
}

.status {
  display: flex;
  align-items: center;
  gap: 16px;
}

.clock {
  min-width: 127px;
}

/* Browser window */
.window {
  display: flex;
  flex: 1;
  flex-direction: column;
  min-height: 0;
  overflow: hidden;
  border-radius: 10px;
  background: #fff;
}

.toolbar {
  display: grid;
  grid-template-columns: 1fr minmax(0, 588px) 1fr;
  align-items: center;
  height: 52px;
  padding-bottom: 2px;
  border-top: 1px solid #6b6a6c;
  border-radius: 10px 10px 0 0;
  background: #373538;
  color: #b4b3b6;
}

.toolbar-left {
  display: flex;
  align-items: center;
  padding: 0 13px 0 20px;
}

.lights {
  display: flex;
  gap: 8px;
  margin-right: 25px;
}

.light {
  width: 12px;
  height: 12px;
  border-radius: 50%;
}

.close {
  background: #ff4644;
}

.minimize {
  background: #ffbd00;
}

.zoom {
  background: #00d042;
}

.history {
  display: flex;
  gap: 25px;
  margin-left: 26px;
}

.dim {
  color: #636165;
}

.shield {
  margin-left: auto;
}

.address {
  display: flex;
  align-items: center;
  gap: 4px;
  height: 34px;
  padding: 0 4px 0 3px;
  border: 4px solid #1b6b9d;
  border-radius: 9px;
  background: #444145;
}

.url {
  field-sizing: content;
  min-width: 0;
  height: 16px;
  margin-right: auto;
  padding: 0;
  border: none;
  outline: none;
  background: #3b6291;
  color: #fff;
  font: 400 13px Inter, "Liberation Sans", sans-serif;
}

.sound {
  margin-right: 6px;
  color: #0a9bff;
}

.toolbar-right {
  display: flex;
  justify-content: flex-end;
  align-items: center;
  gap: 20px;
  padding-right: 20px;
}

.tabs {
  display: grid;
  grid-template-columns: repeat(5, 1fr);
  height: 29px;
  border-bottom: 1px solid #000;
  background: #1e1d1f;
}

.tab {
  display: flex;
  justify-content: center;
  align-items: center;
  gap: 4px;
  min-width: 0;
  padding-bottom: 2px;
  border-top: 1px solid #000;
  border-right: 1px solid #4a494b;
  color: #a09fa1;
  font: 400 11px Inter, "Liberation Sans", sans-serif;
  white-space: nowrap;
}

.tab:last-child {
  border-right: none;
}

.tab.active {
  border-top-color: #373538;
  background: #373538;
  color: #fff;
  font-weight: 600;
}

.tab.playing {
  padding-left: 20px;
}

.tab-sound {
  margin-left: 8px;
  color: #858487;
}

/* Lab page */
.lab-header {
  display: flex;
  align-items: center;
  flex: none;
  height: 63px;
  padding: 0 52px 2px 28px;
  background: #1b66ea;
  color: #fff;
}

.lab-header h1 {
  margin: 0 auto 0 24px;
  font: 400 22px Lato, sans-serif;
}

.avatar {
  margin-left: 42px;
}

.page {
  position: relative;
  display: flex;
  flex: 1;
  min-height: 0;
  overflow: hidden;
}

/* shade cast by the dock */
.page::after {
  content: "";
  position: absolute;
  right: 0;
  bottom: 0;
  left: 0;
  height: 36px;
  background: linear-gradient(rgba(0, 0, 0, 0), rgba(0, 0, 0, .14));
  pointer-events: none;
}

.lab {
  display: grid;
  flex: 1;
  grid-template-columns: 1fr minmax(0, 640px) 1fr;
  align-items: start;
}

.lab-side {
  padding: 24px;
}

.lab-control {
  display: flex;
  align-items: center;
  gap: 29px;
  width: 264px;
  height: 52px;
  padding: 0 10px;
  border-radius: 8px;
  box-shadow: 0 1px 3px rgba(0, 0, 0, .5);
}

.start {
  flex: none;
  width: 112px;
  height: 36px;
  border-radius: 4px;
  background: #019741;
  color: #fff;
  font: 700 14px Lato, sans-serif;
}

.timer {
  font-size: 24px;
}

.lab-content {
  padding-top: 62px;
}

.lab-content h2 {
  margin: 0 0 31px;
  font: 700 33px/40px Lato, sans-serif;
}

.lab-content p {
  margin: 0 0 24px;
  font-size: 17px;
  line-height: 27px;
}

.lab-content code {
  padding: 3px;
  border-radius: 2px;
  background: #f1f1f1;
  font: 15px "DejaVu Sans Mono", monospace;
}

.lab-content pre {
  height: 50px;
  margin: 0 16px 24px;
  padding: 0 16px;
  border-radius: 2px;
  background: #263240;
  color: #d0d0d0;
  font: 13px/50px "DejaVu Sans Mono", monospace;
}

table {
  width: 100%;
  border-collapse: collapse;
  font-size: 14px;
  line-height: 22px;
}

th,
td {
  padding: 8px;
  border: 1px solid #d0d1d5;
  text-align: left;
}

th:first-child {
  width: 114px;
}

.outline {
  display: flex;
  flex-direction: column;
  margin: 24px 64px 0 96px;
}

.outline a {
  padding-left: 16px;
  border-left: 2px solid #e8eaed;
  color: #5f6368;
  font: 700 14px/40px Lato, sans-serif;
  white-space: nowrap;
}

.outline .current {
  border-color: #1b66ea;
  color: #202124;
}

.scrollbar {
  width: 15px;
  padding: 438px 3px 0;
  border-left: 1px solid #e8e8e8;
  background: #fafafa;
}

.thumb {
  height: 26px;
  border-radius: 4px;
  background: #c1c1c1;
}

.score {
  position: absolute;
  top: 24px;
  right: 0;
  width: 64px;
  height: 60px;
  border-radius: 8px 0 0 8px;
  background: #ffaa00;
  box-shadow: 0 2px 6px rgba(0, 0, 0, .3);
  font-size: 16px;
}

/* Dock */
.desktop {
  position: relative;
  flex: none;
  padding: 2px 33px 5px;
}

.disk {
  position: absolute;
  right: 18px;
  top: 0;
}

.dock {
  position: relative;
  display: flex;
  height: 51px;
  padding: 6px 6px 0 5px;
  border: 1px solid #3f3d42;
  border-radius: 14px;
  background: linear-gradient(90deg, #1a1620, #17171a 80%, #17191a 94%, #4b5350);
}

.apps {
  display: flex;
  flex: 1;
  justify-content: space-between;
}

.recent {
  flex: none;
  gap: 8px;
}

.item {
  position: relative;
  width: 34px;
  height: 34px;
}

.running::after {
  content: "";
  position: absolute;
  left: 15px;
  bottom: -8px;
  width: 4px;
  height: 4px;
  border-radius: 50%;
  background: #98979c;
}

.badge {
  position: absolute;
  top: -3px;
  right: -4px;
  width: 15px;
  height: 15px;
  border-radius: 50%;
  background: #f0131b;
  color: #fff;
  font: 500 9px/15px Inter, sans-serif;
  text-align: center;
}

.divider {
  width: 1px;
  height: 38px;
  margin: 0 12px;
  background: #4b4a4f;
}

.cal-month {
  fill: #fff;
  font: 700 7px Inter, sans-serif;
  text-anchor: middle;
}

.cal-day {
  fill: #222;
  font: 400 18px Inter, sans-serif;
  text-anchor: middle;
}

.tv-word {
  fill: #fff;
  font: 600 13px Inter, sans-serif;
  text-anchor: middle;
}

.word-w {
  fill: #fff;
  font: 700 13px Inter, sans-serif;
  text-anchor: middle;
}
```
